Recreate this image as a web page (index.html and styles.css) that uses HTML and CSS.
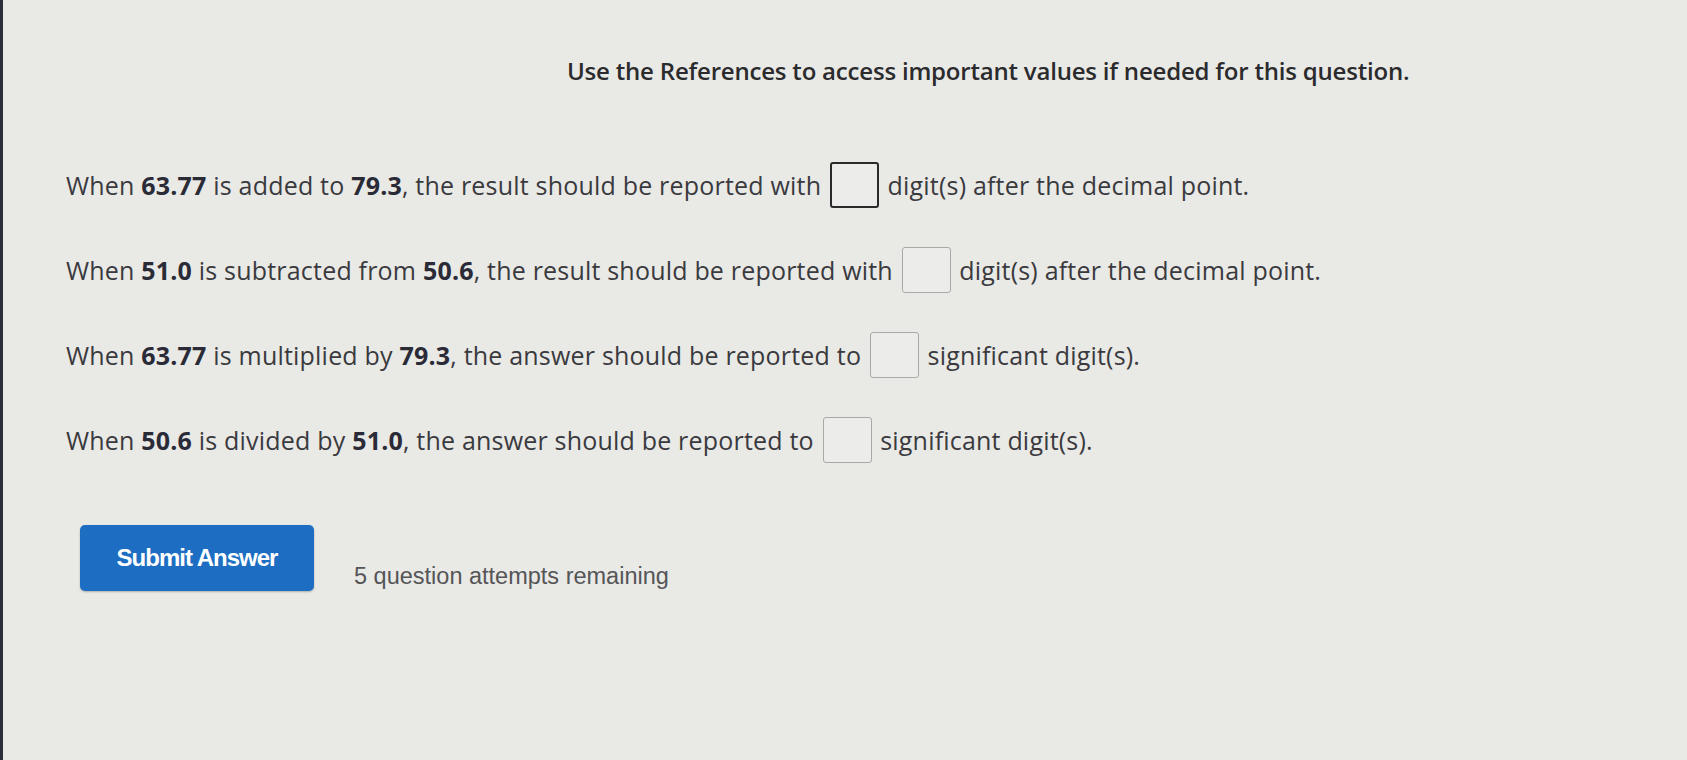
FILE: index.html
```html
<!DOCTYPE html>
<html>
<head>
<meta charset="utf-8">
<link rel="stylesheet" href="styles.css">
</head>
<body>
<div class="screen">
  <h1 class="intro">Use the References to access important values if needed for this question.</h1>
  <div class="questions">
    <p class="q">When <b>63.77</b> is added to <b>79.3</b>, the result should be reported with <span class="box focused"></span> digit(s) after the decimal point.</p>
    <p class="q">When <b>51.0</b> is subtracted from <b>50.6</b>, the result should be reported with <span class="box"></span> digit(s) after the decimal point.</p>
    <p class="q">When <b>63.77</b> is multiplied by <b>79.3</b>, the answer should be reported to <span class="box"></span> significant digit(s).</p>
    <p class="q">When <b>50.6</b> is divided by <b>51.0</b>, the answer should be reported to <span class="box"></span> significant digit(s).</p>
  </div>
  <div class="actions">
    <button class="submit">Submit Answer</button>
    <span class="attempts">5 question attempts remaining</span>
  </div>
</div>
</body>
</html>
```
FILE: styles.css
```css
html, body {
  margin: 0;
  padding: 0;
  height: 100%;
}
body {
  background: #e9e9e6;
  font-family: "Open Sans", "DejaVu Sans", sans-serif;
  color: #3a3a3e;
  overflow: hidden;
}
.screen {
  height: 760px;
  box-sizing: border-box;
  border-left: 3px solid #2c2f3a;
  padding: 0 0 0 63px;
}
.intro {
  margin: 0;
  padding: 54px 0 0 501px;
  font-size: 24px;
  font-weight: 600;
  line-height: 34px;
  color: #2b2b2d;
  letter-spacing: -0.2px;
  white-space: nowrap;
}
.questions {
  display: flex;
  flex-direction: column;
  gap: 39px;
  margin-top: 74px;
}
.q {
  margin: 0;
  font-size: 25px;
  line-height: 34px;
  letter-spacing: 0.2px;
  display: flex;
  align-items: center;
  white-space: pre;
}
.q b {
  font-weight: 700;
  color: #2a2b36;
}
.box {
  display: inline-block;
  width: 49px;
  height: 46px;
  box-sizing: border-box;
  border: 1px solid #a9a9a9;
  border-radius: 3px;
  background: #ececea;
  margin: 0 2px;
}
.box.focused {
  border: 2px solid #2a2a2a;
}
.actions {
  display: flex;
  align-items: flex-start;
  margin-top: 62px;
  padding-left: 14px;
  gap: 40px;
}
.submit {
  width: 234px;
  height: 66px;
  border: none;
  border-radius: 5px;
  background: #1d6ec2;
  color: #ffffff;
  font-family: "Liberation Sans", Arial, sans-serif;
  font-weight: 700;
  font-size: 24px;
  letter-spacing: -1px;
  padding: 0;
  box-shadow: 0 1px 2px rgba(0,0,0,0.25);
}
.attempts {
  margin-top: 38px;
  font-family: "Liberation Sans", Arial, sans-serif;
  font-size: 23.5px;
  color: #555557;
}
```
